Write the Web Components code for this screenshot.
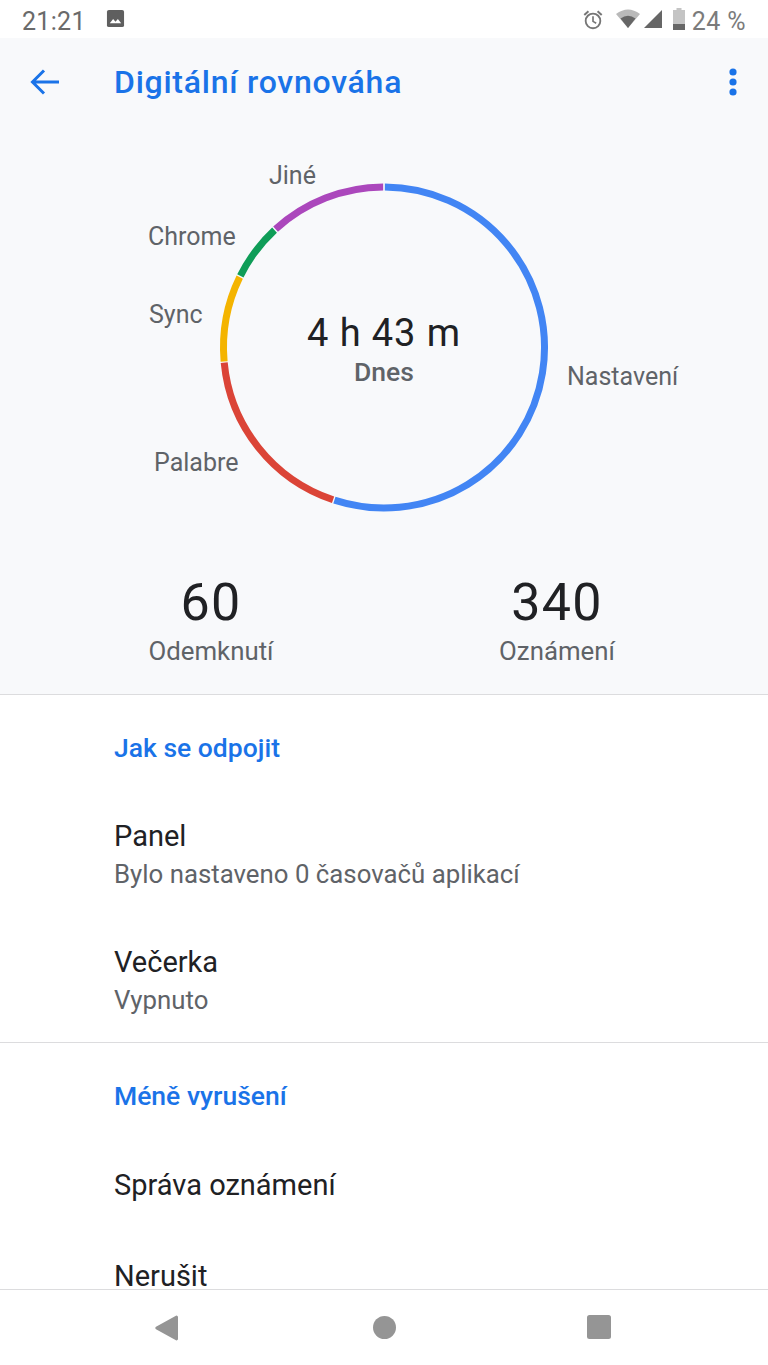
<!DOCTYPE html>
<html lang="cs">
<head>
<meta charset="UTF-8">
<title>Digitální rovnováha</title>
<style>
  html, body { margin: 0; background: #fff; }
  body { font-family: Roboto, "Noto Sans", sans-serif; width: 768px; height: 1365px; overflow: hidden; display: flex; flex-direction: column; }
  dw-list { flex: 1; min-height: 0; }
</style>
</head>
<body>
<dw-status></dw-status>
<dw-appbar>Digitální rovnováha</dw-appbar>
<dw-hero></dw-hero>
<dw-list>
  <dw-section>Jak se odpojit</dw-section>
  <dw-item style="--top:54px" sub="Bylo nastaveno 0 časovačů aplikací">Panel</dw-item>
  <dw-item style="--top:28px" sub="Vypnuto">Večerka</dw-item>
  <dw-divider></dw-divider>
  <dw-section>Méně vyrušení</dw-section>
  <dw-item style="--top:55px">Správa oznámení</dw-item>
  <dw-item style="--top:59px;--lh:28px">Nerušit</dw-item>
</dw-list>
<dw-navbar></dw-navbar>

<script>
  function define(name, html, init) {
    customElements.define(name, class extends HTMLElement {
      constructor() {
        super();
        this.attachShadow({mode: 'open'}).innerHTML = html;
      }
      connectedCallback() {
        if (init) init(this, this.shadowRoot);
      }
    });
  }

  define('dw-status', `
    <style>
      :host { display: flex; flex: none; align-items: center; height: 38px; background: #fff; color: #6a6a6a; padding: 0 22px; font-size: 25px; }
      .time { margin-top: 4px; letter-spacing: .3px; }
      .pic { margin-left: 20px; }
      .right { margin-left: auto; display: flex; align-items: center; }
      .pct { margin-left: 6px; margin-top: 4px; font-size: 25px; color: #7b7b7b; letter-spacing: .4px; }
      svg { display: block; }
    </style>
    <span class="time">21:21</span>
    <svg class="pic" width="19" height="19" viewBox="0 0 20 20" style="margin-top:-1px"><rect x="1" y="1" width="18" height="18" rx="2" fill="#5f5f5f"/><path d="M4 15l3.500-4.500 2.500 3 2.500-3L16 15z" fill="#fff"/></svg>
    <div class="right">
      <svg width="22" height="22" viewBox="0 0 24 24" fill="none" stroke="#767676" style="margin-top:1px"><circle cx="12" cy="13" r="8" stroke-width="2"/><path d="M12 8v5.500l3.500 2" stroke-width="1.800"/><path d="M2.500 6.500L7 2.500M21.500 6.500L17 2.500" stroke-width="2.200"/></svg>
      <svg width="26" height="22" viewBox="0 0 26 22" style="margin-left:11px"><path d="M1 6Q13-3 25 6L13 20z" fill="#b9b9b9"/><path d="M5.500 10.500Q13 5 20.500 10.500L13 20z" fill="#666"/></svg>
      <svg width="20" height="20" viewBox="0 0 20 20" style="margin-left:2px"><path d="M19 1v18H1z" fill="#666"/></svg>
      <svg width="14" height="24" viewBox="0 0 14 24" style="margin-left:9px"><path d="M4.500 1h5v2H13v20H1V3h3.500z" fill="#c4c4c4"/><rect x="1" y="17" width="12" height="6" fill="#666"/></svg>
      <span class="pct">24 %</span>
    </div>
  `);

  define('dw-appbar', `
    <style>
      :host { display: flex; flex: none; align-items: center; height: 89px; background: #f8f9fb; color: #1a73e8; font-size: 32px; font-weight: 500; letter-spacing: .75px; }
      svg { display: block; flex: none; }
      .title { margin-left: 54px; flex: 1; margin-top: -2px; }
    </style>
    <svg style="margin-left:30px;margin-top:-1px" width="30" height="30" viewBox="0 0 30 30" fill="none" stroke="#1a73e8" stroke-width="3"><path d="M29 15H3M14 3.500L2.500 15 14 26.500"/></svg>
    <span class="title"><slot></slot></span>
    <svg style="margin-right:30px;margin-top:-2px" width="10" height="30" viewBox="0 0 10 30" fill="#1a73e8"><circle cx="5" cy="5" r="3.600"/><circle cx="5" cy="15" r="3.600"/><circle cx="5" cy="25" r="3.600"/></svg>
  `);

  define('dw-hero', `
    <style>
      :host { display: block; flex: none; background: #f8f9fb; border-bottom: 1px solid #dcdcde; height: 567px; position: relative; }
      .chart { position: absolute; left: 0; top: 0; width: 768px; height: 440px; }
      .chart svg { position: absolute; left: 0; top: 0; }
      .lbl { position: absolute; font-size: 25px; line-height: 30px; color: #5f6368; white-space: nowrap; }
      .center { position: absolute; left: 184px; width: 400px; text-align: center; }
      .time { top: 183px; font-size: 38px; line-height: 46px; color: #202124; letter-spacing: .9px; }
      .day { top: 230px; font-size: 26.5px; line-height: 30px; font-weight: 500; color: #5f6368; }
      .stats { position: absolute; left: 0; right: 0; top: 448px; display: grid; grid-template-columns: 422px 270px; }
      .stat { text-align: center; }
      .num { font-size: 52px; line-height: 56px; color: #202124; letter-spacing: 1.2px; }
      .cap { font-size: 25.800px; line-height: 30px; color: #5f6368; margin-top: 5px; }
    </style>
    <div class="chart">
      <svg id="ring" width="768" height="440" viewBox="0 0 768 440" fill="none" stroke-width="7"></svg>
      <span class="lbl" style="left:269px;top:34px">Jiné</span>
      <span class="lbl" style="left:148px;top:95px">Chrome</span>
      <span class="lbl" style="left:149px;top:173px">Sync</span>
      <span class="lbl" style="left:154px;top:321px">Palabre</span>
      <span class="lbl" style="left:567px;top:235px">Nastavení</span>
      <div class="center time">4 h 43 m</div>
      <div class="center day">Dnes</div>
    </div>
    <div class="stats">
      <div class="stat"><div class="num">60</div><div class="cap">Odemknutí</div></div>
      <div class="stat"><div class="num">340</div><div class="cap">Oznámení</div></div>
    </div>
  `, (el, root) => {
    // ring segments, angles clockwise from the top
    const segs = [
      [0.3, 198, '#4285f4'],
      [198.5, 264.6, '#db4437'],
      [265, 296, '#f4b400'],
      [296.5, 317, '#0f9d58'],
      [317.5, 359.7, '#ab47bc']
    ];
    const cx = 384, cy = 220.5, r = 160.5;
    const pt = a => {
      const t = a * Math.PI / 180;
      return (cx + r * Math.sin(t)).toFixed(2) + ' ' + (cy - r * Math.cos(t)).toFixed(2);
    };
    root.getElementById('ring').innerHTML = segs.map(([a, b, c]) =>
      `<path d="M${pt(a)}A${r} ${r} 0 ${b - a > 180 ? 1 : 0} 1 ${pt(b)}" stroke="${c}"/>`).join('');
  });

  define('dw-list', `
    <style>
      :host { display: block; background: #fff; }
    </style>
    <slot></slot>
  `);

  define('dw-section', `
    <style>
      :host { display: block; padding: 37px 0 0 114px; height: 32px; font-size: 26.500px; line-height: 32px; font-weight: 500; color: #1a73e8; }
    </style>
    <slot></slot>
  `);

  define('dw-item', `
    <style>
      :host { display: block; padding: var(--top, 32px) 0 0 114px; }
      .t { font-size: 29px; line-height: var(--lh, 36px); color: #202124; }
      .s { font-size: 25.800px; line-height: 32px; color: #5f6368; margin-top: 4px; padding-bottom: 26px; }
      .s:empty { display: none; }
    </style>
    <div class="t"><slot></slot></div>
    <div class="s"></div>
  `, (el, root) => {
    root.querySelector('.s').textContent = el.getAttribute('sub') || '';
  });

  define('dw-divider', `
    <style>
      :host { display: block; height: 1px; background: #dcdcde; }
    </style>
  `);

  define('dw-navbar', `
    <style>
      :host { display: block; position: relative; flex: none; height: 75px; border-top: 1px solid #dcdcde; background: #fff; }
      svg { position: absolute; top: 25px; }
    </style>
    <svg style="left:155px" width="23" height="26" viewBox="0 0 23 26"><path d="M20.500 1a1.500 1.500 0 0 1 2.500 1v22a1.500 1.500 0 0 1-2.500 1L1 14.200a1.400 1.400 0 0 1 0-2.400z" fill="#959595"/></svg>
    <svg style="left:373px;top:26px" width="23" height="23" viewBox="0 0 24 24"><circle cx="12" cy="12" r="12" fill="#959595"/></svg>
    <svg style="left:587px" width="24" height="24" viewBox="0 0 24 24"><rect width="24" height="24" rx="2.500" fill="#959595"/></svg>
  `);
</script>
</body>
</html>
